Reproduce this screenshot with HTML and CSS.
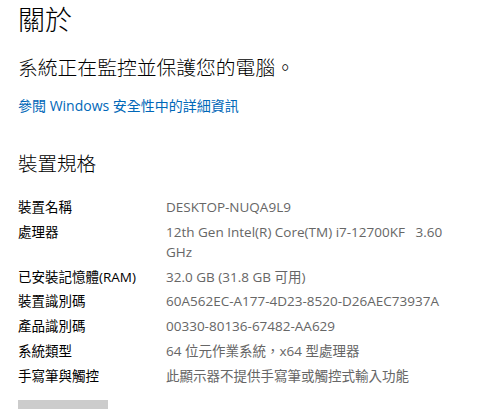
FILE: index.html
```html
<!DOCTYPE html>
<html lang="zh-Hant">
<head>
<meta charset="utf-8">
<title>關於</title>
<link rel="stylesheet" href="styles.css">
</head>
<body>
<main class="page">
  <h1 class="title">關於</h1>
  <p class="status">系統正在監控並保護您的電腦。</p>
  <a class="link" href="#">參閱 Windows 安全性中的詳細資訊</a>
  <h2 class="section">裝置規格</h2>
  <dl class="specs">
    <div class="row"><dt>裝置名稱</dt><dd>DESKTOP-NUQA9L9</dd></div>
    <div class="row"><dt>處理器</dt><dd>12th Gen Intel(R) Core(TM) i7-12700KF&nbsp;&nbsp;&nbsp;3.60<br>GHz</dd></div>
    <div class="row"><dt>已安裝記憶體(RAM)</dt><dd>32.0 GB (31.8 GB 可用)</dd></div>
    <div class="row"><dt>裝置識別碼</dt><dd>60A562EC-A177-4D23-8520-D26AEC73937A</dd></div>
    <div class="row"><dt>產品識別碼</dt><dd>00330-80136-67482-AA629</dd></div>
    <div class="row"><dt>系統類型</dt><dd>64 位元作業系統，x64 型處理器</dd></div>
    <div class="row"><dt>手寫筆與觸控</dt><dd>此顯示器不提供手寫筆或觸控式輸入功能</dd></div>
  </dl>
  <div class="button-stub"></div>
</main>
</body>
</html>
```
FILE: styles.css
```css
html, body {
  margin: 0;
  padding: 0;
  background: #ffffff;
}
body {
  font-family: "Open Sans", "Noto Sans", "Noto Sans CJK TC", sans-serif;
  color: #000000;
  overflow: hidden;
}
.page {
  display: flex;
  flex-direction: column;
  align-items: flex-start;
  padding: 1px 0 0 18px;
}
.title {
  margin: 0;
  font-family: "Noto Sans CJK TC", sans-serif;
  font-weight: 300;
  font-size: 27px;
  line-height: 36px;
}
.status {
  margin: 16px 0 0;
  font-family: "Noto Sans CJK TC", sans-serif;
  font-weight: 300;
  font-size: 19.8px;
  line-height: 28px;
}
.link {
  margin-top: 15px;
  font-size: 14px;
  line-height: 20px;
  color: #0067b8;
  text-decoration: none;
}
.section {
  margin: 33px 0 0;
  font-family: "Noto Sans CJK TC", sans-serif;
  font-weight: 300;
  font-size: 19.5px;
  line-height: 28px;
}
.specs {
  margin: 20px 0 0;
  display: flex;
  flex-direction: column;
  gap: 4.8px;
}
.row {
  display: flex;
}
.row dt {
  width: 148px;
  flex: none;
  font-size: 13.5px;
  line-height: 20px;
  color: #000000;
}
.row dd {
  margin: 0;
  font-size: 13.5px;
  line-height: 20px;
  color: #666666;
}
.button-stub {
  margin-top: 14px;
  width: 90px;
  height: 12px;
  background: #cccccc;
}
```
